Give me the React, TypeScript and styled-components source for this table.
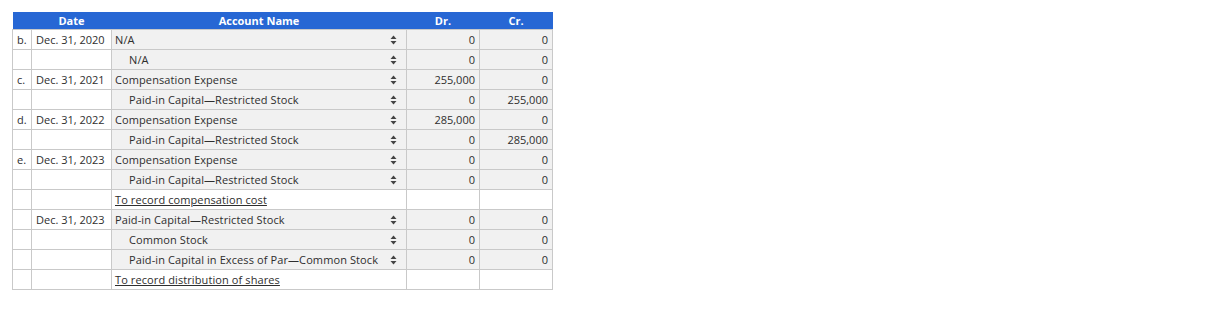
import React from "react";
import styled, { createGlobalStyle } from "styled-components";

const GlobalStyle = createGlobalStyle`
  body {
    margin: 0;
    background: #fff;
    font-family: "Open Sans", "Liberation Sans", sans-serif;
  }
`;

type Line = {
  letter?: string;
  date?: string;
  account: string;
  indent?: boolean;
  memo?: boolean;
  dr?: string;
  cr?: string;
};

const lines: Line[] = [
  { letter: "b.", date: "Dec. 31, 2020", account: "N/A", dr: "0", cr: "0" },
  { account: "N/A", indent: true, dr: "0", cr: "0" },
  { letter: "c.", date: "Dec. 31, 2021", account: "Compensation Expense", dr: "255,000", cr: "0" },
  { account: "Paid-in Capital\u2014Restricted Stock", indent: true, dr: "0", cr: "255,000" },
  { letter: "d.", date: "Dec. 31, 2022", account: "Compensation Expense", dr: "285,000", cr: "0" },
  { account: "Paid-in Capital\u2014Restricted Stock", indent: true, dr: "0", cr: "285,000" },
  { letter: "e.", date: "Dec. 31, 2023", account: "Compensation Expense", dr: "0", cr: "0" },
  { account: "Paid-in Capital\u2014Restricted Stock", indent: true, dr: "0", cr: "0" },
  { account: "To record compensation cost", memo: true },
  { date: "Dec. 31, 2023", account: "Paid-in Capital\u2014Restricted Stock", dr: "0", cr: "0" },
  { account: "Common Stock", indent: true, dr: "0", cr: "0" },
  { account: "Paid-in Capital in Excess of Par\u2014Common Stock", indent: true, dr: "0", cr: "0" },
  { account: "To record distribution of shares", memo: true },
];

const Page = styled.div`
  padding: 12px;
`;

const Journal = styled.table`
  border-collapse: collapse;
  table-layout: fixed;
  width: 540px;
  font-size: 11px;
  color: #2e2e2e;
`;

const HeadCell = styled.th<{ $w: number }>`
  width: ${(p) => p.$w}px;
  height: 17px;
  padding: 0;
  background: #2767d4;
  color: #fff;
  font-weight: 700;
  font-size: 11px;
  text-align: center;
  border: none;
  line-height: 17px;
`;

const Cell = styled.td<{ $input?: boolean; $align?: "left" | "right" }>`
  height: 19px;
  padding: 0 4px;
  border: 1px solid #c9c9c9;
  background: ${(p) => (p.$input ? "#f1f1f1" : "#fff")};
  text-align: ${(p) => p.$align || "left"};
  white-space: nowrap;
  line-height: 19px;
`;

const AccountCell = styled(Cell)`
  padding: 0 3px;
  letter-spacing: 0.1px;
`;

const SelectBox = styled.div<{ $indent?: boolean }>`
  display: flex;
  align-items: center;
  justify-content: space-between;
  padding-left: ${(p) => (p.$indent ? 14 : 0)}px;
  padding-right: 6px;
`;

const Memo = styled.span`
  text-decoration: underline;
`;

const Arrows = () => (
  <svg width="7" height="10" viewBox="0 0 7 10">
    <path d="M3.5 0.5 L6.5 4 L0.5 4 Z" fill="#444" />
    <path d="M3.5 9.5 L6.5 6 L0.5 6 Z" fill="#444" />
  </svg>
);

export default function App() {
  return (
    <Page>
      <GlobalStyle />
      <Journal>
        <thead>
          <tr>
            <HeadCell $w={19} />
            <HeadCell $w={80}>Date</HeadCell>
            <HeadCell $w={295}>Account Name</HeadCell>
            <HeadCell $w={73}>Dr.</HeadCell>
            <HeadCell $w={73}>Cr.</HeadCell>
          </tr>
        </thead>
        <tbody>
          {lines.map((l, i) => (
            <tr key={i}>
              <Cell>{l.letter}</Cell>
              <Cell>{l.date}</Cell>
              {l.memo ? (
                <AccountCell>
                  <Memo>{l.account}</Memo>
                </AccountCell>
              ) : (
                <AccountCell $input>
                  <SelectBox $indent={l.indent}>
                    <span>{l.account}</span>
                    <Arrows />
                  </SelectBox>
                </AccountCell>
              )}
              <Cell $input={!l.memo} $align="right">
                {l.dr}
              </Cell>
              <Cell $input={!l.memo} $align="right">
                {l.cr}
              </Cell>
            </tr>
          ))}
        </tbody>
      </Journal>
    </Page>
  );
}
